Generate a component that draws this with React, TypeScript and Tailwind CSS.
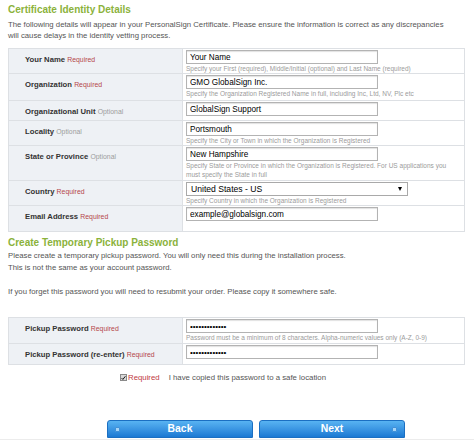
import React from 'react';

const FONT = "font-['Liberation_Sans',Arial,sans-serif]";

type Row = {
  label: string;
  tag: 'Required' | 'Optional';
  value: string;
  help?: string[];
  kind?: 'text' | 'select' | 'password';
  h: string;
};

const identityRows: Row[] = [
  {
    label: 'Your Name',
    tag: 'Required',
    value: 'Your Name',
    help: ['Specify your First (required), Middle/Initial (optional) and Last Name (required)'],
    h: 'h-[25px]',
  },
  {
    label: 'Organization',
    tag: 'Required',
    value: 'GMO GlobalSign Inc.',
    help: ['Specify the Organization Registered Name in full, including Inc, Ltd, NV, Plc etc'],
    h: 'h-[27px]',
  },
  { label: 'Organizational Unit', tag: 'Optional', value: 'GlobalSign Support', h: 'h-[20px]' },
  {
    label: 'Locality',
    tag: 'Optional',
    value: 'Portsmouth',
    help: ['Specify the City or Town in which the Organization is Registered'],
    h: 'h-[25px]',
  },
  {
    label: 'State or Province',
    tag: 'Optional',
    value: 'New Hampshire',
    help: [
      'Specify State or Province in which the Organization is Registered. For US applications you',
      'must specify the State in full',
    ],
    h: 'h-[35px]',
  },
  {
    label: 'Country',
    tag: 'Required',
    value: 'United States - US',
    kind: 'select',
    help: ['Specify Country in which the Organization is Registered'],
    h: 'h-[22px]',
  },
  { label: 'Email Address', tag: 'Required', value: 'example@globalsign.com', h: 'h-[26px]' },
];

const pickupRows: Row[] = [
  {
    label: 'Pickup Password',
    tag: 'Required',
    value: 'abcdefghijklm',
    kind: 'password',
    help: ['Password must be a minimum of 8 characters. Alpha-numeric values only (A-Z, 0-9)'],
    h: 'h-[26px]',
  },
  { label: 'Pickup Password (re-enter)', tag: 'Required', value: 'abcdefghijklm', kind: 'password', h: 'h-[21px]' },
];

function Field({ row }: { row: Row }) {
  if (row.kind === 'select') {
    return (
      <div className="relative w-[222px] h-[14px]">
        <select
          defaultValue={row.value}
          className="block w-full h-full appearance-none border border-[#a9a9a9] bg-white pl-[4px] text-[8.6px] leading-none text-black"
        >
          <option>{row.value}</option>
        </select>
        {/* arrow sits over the select */}
        <span className="absolute right-[6px] top-[5px] w-0 h-0 border-x-[2.5px] border-x-transparent border-t-[4px] border-t-black" />
      </div>
    );
  }
  const pw = row.kind === 'password';
  return (
    <input
      readOnly
      type={pw ? 'password' : 'text'}
      value={row.value}
      className={
        pw
          ? 'block w-[192px] h-[14px] border border-[#b3b3b3] bg-white px-[3px] text-[8px] leading-none text-black shadow-[inset_0_1px_1px_rgba(0,0,0,0.12)] outline-none'
          : 'block w-[192px] h-[14px] border border-[#b3b3b3] bg-white px-[3px] text-[8.2px] leading-none text-black shadow-[inset_0_1px_1px_rgba(0,0,0,0.12)] outline-none'
      }
    />
  );
}

function FieldTable({ rows }: { rows: Row[] }) {
  return (
    <table className="w-[457px] border-collapse border border-[#dde0e4]">
      <tbody>
        {rows.map((r) => (
          <tr key={r.label} className={`${r.h} border-b border-[#dde0e4]`}>
            <td className="w-[174px] align-top bg-[#eef1f5] border-r border-[#dde0e4] pl-4 pt-[5px] text-[7.7px] leading-[11px] font-bold text-[#333] whitespace-nowrap">
              {r.label}{' '}
              <span
                className={
                  r.tag === 'Required'
                    ? 'text-[6.9px] font-normal text-[#b5474b]'
                    : 'text-[6.9px] font-normal text-[#9c9c9c]'
                }
              >
                {r.tag}
              </span>
            </td>
            <td className="align-top pl-[3px] pt-[1px]">
              <Field row={r} />
              {r.help && (
                <div className="text-[6.5px] leading-[9px] text-[#9b9b9b] whitespace-nowrap">
                  {r.help.map((line) => (
                    <div key={line}>{line}</div>
                  ))}
                </div>
              )}
            </td>
          </tr>
        ))}
      </tbody>
    </table>
  );
}

function Button({ label, side }: { label: string; side: 'left' | 'right' }) {
  return (
    <button className="relative flex items-center justify-center w-[146px] h-[18px] rounded-t-[3px] border border-[#1b6fc2] bg-gradient-to-b from-[#58b3f2] to-[#1b79d3] text-[10.4px] font-bold text-white">
      {/* small square marker */}
      <span
        className={
          side === 'left'
            ? 'absolute left-[7px] top-[6px] w-[5px] h-[5px] rounded-[1px] border border-[#3f90d8] bg-[#a5d4f7]'
            : 'absolute right-[7px] top-[6px] w-[5px] h-[5px] rounded-[1px] border border-[#3f90d8] bg-[#a5d4f7]'
        }
      />
      {label}
    </button>
  );
}

export default function App() {
  return (
    <div className={`${FONT} w-[474px] h-[440px] overflow-hidden bg-white`}>
      <div className="px-2 pt-[3px]">
        <h2 className="text-[10px] leading-[14px] font-bold text-[#8bb23b]">Certificate Identity Details</h2>
        <p className="mt-[2px] text-[7.75px] leading-[11px] text-[#555] whitespace-nowrap">
          The following details will appear in your PersonalSign Certificate. Please ensure the information is correct as any discrepancies
          <br />
          will cause delays in the identity vetting process.
        </p>
        <div className="mt-[7px]">
          <FieldTable rows={identityRows} />
        </div>

        <h2 className="mt-[4px] text-[10px] leading-[14px] font-bold text-[#8bb23b]">Create Temporary Pickup Password</h2>
        <div className="text-[7.75px] leading-[12px] text-[#555] whitespace-nowrap">
          <p>Please create a temporary pickup password. You will only need this during the installation process.</p>
          <p>This is not the same as your account password.</p>
          <p className="mt-[12px]">If you forget this password you will need to resubmit your order. Please copy it somewhere safe.</p>
        </div>
        <div className="mt-[19px]">
          <FieldTable rows={pickupRows} />
        </div>

        <div className="mt-[7px] ml-[112px] flex items-center text-[7.8px] leading-[11px]">
          <span className="flex items-center justify-center w-[7px] h-[7px] border border-[#8a8a8a] bg-[#d9d9d9]">
            <svg viewBox="0 0 8 8" className="w-[6px] h-[6px]">
              <path d="M1 4.2 L3 6.3 L7 1.2" fill="none" stroke="#111" strokeWidth="1.6" />
            </svg>
          </span>
          <span className="ml-[1px] text-[#c0393f]">Required</span>
          <span className="ml-[9px] text-[#555]">I have copied this password to a safe location</span>
        </div>

        <div className="mt-[37px] ml-[99px] flex gap-[6px]">
          <Button label="Back" side="left" />
          <Button label="Next" side="right" />
        </div>
      </div>
      <div className="mt-[1px] h-[4px] bg-[#ececec]" />
    </div>
  );
}
